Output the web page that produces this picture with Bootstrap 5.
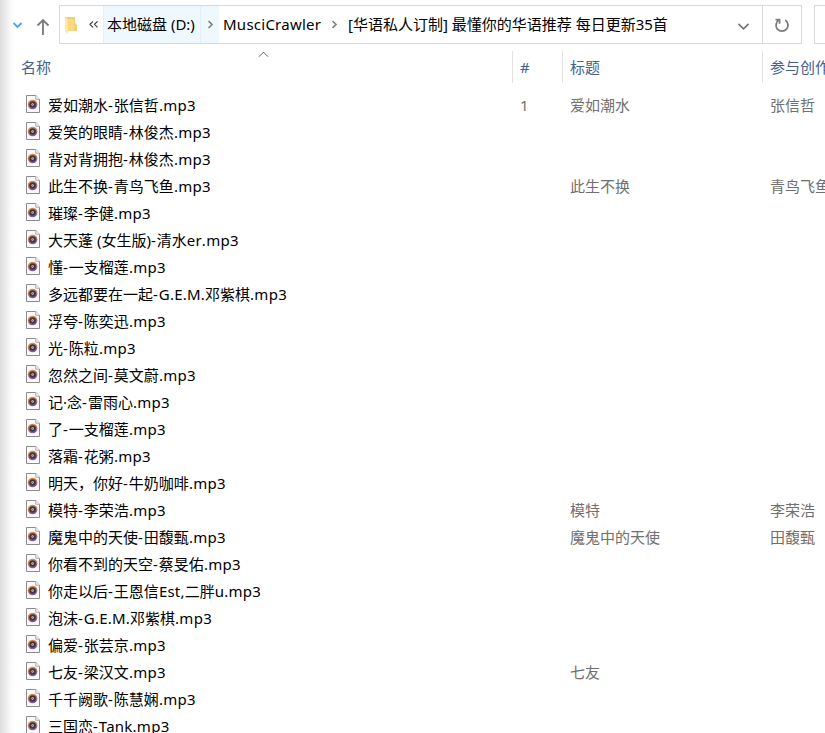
<!DOCTYPE html>
<html lang="zh-CN">
<head>
<meta charset="utf-8">
<meta name="viewport" content="width=device-width, initial-scale=1">
<title>MusciCrawler</title>
<link href="https://cdn.jsdelivr.net/npm/bootstrap@5.3.0/dist/css/bootstrap.min.css" rel="stylesheet">
<style>
body{font-family:"Noto Sans","Noto Sans CJK SC",sans-serif;font-size:15px;line-height:27px;color:#000;background:#fff;height:733px}
.window{height:733px;background:linear-gradient(90deg,#dcdcdc 0,#eaeaea 5px,#f8f8f8 10px,#fff 15px)}
.toolbar{height:44px;padding-top:5px}
.toolbar>div{flex:none}
.history{width:34px;padding-left:12px}
.up-btn{width:25px;padding-left:2px}
.address{width:704px;height:39px;border:1px solid #d9d9d9;background:#fff}
.folder{width:43px;padding-left:5px}
.drive{width:98px;background:#f0f8ff;border-right:1px solid #dfeffc;border-left:1px solid #e3f1fd;padding-left:3px}
.drive-arrow{width:18px;background:#f0f8ff}
.crumb{width:100px;letter-spacing:.25px}
.current{padding-left:10px}
.reload{width:39px;height:39px;border:1px solid #d9d9d9;border-left:0}
.search{width:20px;height:39px;border:1px solid #d9d9d9;margin-left:12px}
.files{display:grid;grid-template-columns:512px 50px 200px 1fr}
.heads{height:48px;color:#44618e;padding-top:7px}
.heads>div{height:32px;line-height:32px}
.heads>div+div{border-left:1px solid #e2e2e2;padding-left:7px}
.sorted{padding-left:21px}
.sort-mark{left:258px;top:0}
.entry{height:27px}
.entry>div+div{padding-left:8px;color:#707070}
.entry>.filename{padding-left:26px}
.filename svg{margin-top:-3px;margin-right:8px}
.ext{letter-spacing:.3px}
.latin{letter-spacing:.2px}
.dash{letter-spacing:1px}
</style>
<script src="https://cdn.jsdelivr.net/npm/bootstrap@5.3.0/dist/js/bootstrap.bundle.min.js"></script>
</head>
<body class="overflow-hidden">
<svg width="0" height="0" class="position-absolute" aria-hidden="true">
<defs><linearGradient id="disc" x1="0" y1="0" x2="0.3" y2="1"><stop offset="0" stop-color="#ee9848"/><stop offset=".5" stop-color="#cc7450"/><stop offset="1" stop-color="#8a55a0"/></linearGradient></defs>
<symbol id="mp3" viewBox="0 0 14 18"><path d="M.5.5h9.300l3.700 3.700v13.300H.5z" fill="#faf9fd" stroke="#8b8b8b"/><path d="M9.800.5v3.700h3.700" fill="#fff" stroke="#a5a5a5"/><circle cx="6.600" cy="9.500" r="4.800" fill="url(#disc)"/><circle cx="6.600" cy="9.500" r="3.300" fill="#3b3842"/><circle cx="6.600" cy="9.500" r="1.200" fill="#d4d4d4"/><circle cx="6.600" cy="9.500" r=".5" fill="#555"/></symbol>
</svg>
<main class="window overflow-hidden">
<nav class="toolbar d-flex text-nowrap">
<div class="history d-flex align-items-center"><svg width="11" height="8" viewBox="0 0 11 8" fill="none" stroke="#4aa3f5" stroke-width="1.800"><path d="M1.500 2l4 4 4-4"/></svg></div>
<div class="up-btn d-flex align-items-center"><svg width="14" height="18" viewBox="0 0 14 18" fill="none" stroke="#7e7e7e" stroke-width="1.900" class="mt-1"><path d="M7 17V2M1.500 7.500L7 2l5.500 5.500"/></svg></div>
<div class="address d-flex">
<div class="folder d-flex align-items-center"><svg width="13" height="18" viewBox="0 0 13 18"><path d="M0 1h10v6l2 2v6H0z" fill="#f1cf72"/><path d="M0 1l3 2v15l-3-3z" fill="#ffe7a0"/><path d="M3 3h6v12H3z" fill="#f8d982"/></svg><svg width="10" height="10" viewBox="0 0 10 10" fill="none" stroke="#3c3c3c" stroke-width="1.200" class="ms-auto me-1"><path d="M4 1.300L1 4.300l3 3M8.500 1.300l-3 3 3 3"/></svg></div>
<div class="drive d-flex align-items-center">本地磁盘 (D:)</div>
<div class="drive-arrow d-flex align-items-center justify-content-center"><svg width="7" height="9" viewBox="0 0 7 9" fill="none" stroke="#808080" stroke-width="1.700"><path d="M1.500 1l3.500 3.500L1.500 8"/></svg></div>
<div class="d-flex align-items-center ps-1"><span class="crumb">MusciCrawler</span></div>
<div class="d-flex align-items-center ps-2"><svg width="7" height="9" viewBox="0 0 7 9" fill="none" stroke="#808080" stroke-width="1.700"><path d="M1.500 1l3.500 3.500L1.500 8"/></svg></div>
<div class="current d-flex align-items-center"><span>[华语私人订制] 最懂你的华语推荐 每日更新35首</span></div>
<div class="d-flex align-items-center ms-auto pe-2"><svg width="13" height="9" viewBox="0 0 13 9" fill="none" stroke="#747474" stroke-width="1.700" class="me-1 mt-1"><path d="M1.500 1.800l5 5 5-5"/></svg></div>
</div>
<div class="reload d-flex align-items-center justify-content-center"><svg width="16" height="16" viewBox="0 0 16 16" fill="none" stroke="#7d7d7d" stroke-width="1.800"><path d="M11.200 3.100a6 6 0 1 1-6.400 0"/><path d="M1.500 2.700h4v4"/></svg></div>
<div class="search"></div>
</nav>
<header class="files heads text-nowrap">
<div class="sorted position-relative">名称<svg class="sort-mark position-absolute" width="11" height="7" viewBox="0 0 11 7" fill="none" stroke="#666" stroke-width="1"><path d="M1 5.700L5.500 1.200 10 5.700"/></svg></div>
<div>#</div><div>标题</div><div>参与创作</div>
</header>
<section id="list" class="text-nowrap"></section>
</main>
<script>
const songs = [
["爱如潮水-张信哲","1","爱如潮水","张信哲"],["爱笑的眼睛-林俊杰"],["背对背拥抱-林俊杰"],["此生不换-青鸟飞鱼","","此生不换","青鸟飞鱼"],
["璀璨-李健"],["大天蓬 (女生版)-清水er"],["懂-一支榴莲"],["多远都要在一起-G.E.M.邓紫棋"],["浮夸-陈奕迅"],["光-陈粒"],
["忽然之间-莫文蔚"],["记·念-雷雨心"],["了-一支榴莲"],["落霜-花粥"],["明天，你好-牛奶咖啡"],["模特-李荣浩","","模特","李荣浩"],
["魔鬼中的天使-田馥甄","","魔鬼中的天使","田馥甄"],["你看不到的天空-蔡旻佑"],["你走以后-王恩信Est,二胖u"],["泡沫-G.E.M.邓紫棋"],
["偏爱-张芸京"],["七友-梁汉文","","七友"],["千千阙歌-陈慧娴"],["三国恋-Tank"]];
const styled = name => name.replace(/[A-Za-z.,]+|-/g, run => `<span class="${run === "-" ? "dash" : "latin"}">${run}</span>`);
document.getElementById("list").innerHTML = songs.map(([name, no = "", title = "", artist = ""]) =>
`<div class="files entry"><div class="filename d-flex align-items-center"><svg width="14" height="18"><use href="#mp3"/></svg><span>${styled(name)}<span class="ext">.mp3</span></span></div><div>${no}</div><div>${title}</div><div>${artist}</div></div>`).join("");
</script>
</body>
</html>
